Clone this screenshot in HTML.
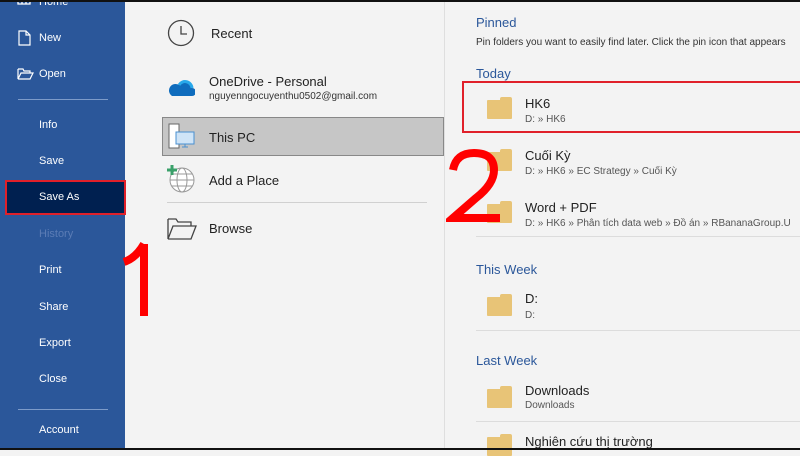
<!DOCTYPE html>
<html><head><meta charset="utf-8"><style>
*{margin:0;padding:0;box-sizing:border-box}
body{width:800px;height:450px;overflow:hidden;background:#f3f3f3;font-family:"Liberation Sans","DejaVu Sans",sans-serif;position:relative}
.a{position:absolute;white-space:nowrap}
#side{position:absolute;left:0;top:0;width:125px;height:450px;background:#2b579a}
.s{position:absolute;left:39px;color:#fff;font-size:11px}
.hdr{color:#2b579a;font-size:13px}
.t{font-size:13px;color:#222}
.p{font-size:10px;color:#555}
.fold{position:absolute;width:25px;height:19px;background:#e8c477;border-radius:1px}
.fold:before{content:"";position:absolute;right:0;top:-3px;width:12px;height:4px;background:#e8c477;border-radius:2px 2px 0 0}
.hl{position:absolute;left:476px;height:1px;background:#dcdcdc;width:324px}
.num{position:absolute;color:#f00;font-family:"DejaVu Sans",sans-serif;font-weight:normal}
</style></head><body>
<div id="side">
<div class="s" style="top:-4px">Home</div>
<div class="s" style="top:32px">New</div>
<div class="s" style="top:68px">Open</div>
<div class="a" style="left:18px;top:99px;width:90px;height:1px;background:#7d9bc9"></div>
<div class="s" style="top:119px">Info</div>
<div class="s" style="top:155px">Save</div>
<div class="a" style="left:5px;top:180px;width:121px;height:35px;background:#002050;border:2px solid #e0202a"></div>
<div class="s" style="top:191px">Save As</div>
<div class="s" style="top:228px;color:#5b7cb5">History</div>
<div class="s" style="top:264px">Print</div>
<div class="s" style="top:301px">Share</div>
<div class="s" style="top:337px">Export</div>
<div class="s" style="top:373px">Close</div>
<div class="a" style="left:18px;top:409px;width:90px;height:1px;background:#7d9bc9"></div>
<div class="s" style="top:424px">Account</div>
<svg class="a" style="left:16px;top:-4px" width="16" height="10"><path d="M2 0v8h12V0M6 8V3h4v5" fill="none" stroke="#fff" stroke-width="1.3"/></svg>
<svg class="a" style="left:18px;top:30px" width="14" height="16"><path d="M1 1h7l4 4v10H1z M8 1v4h4" fill="none" stroke="#fff" stroke-width="1.2"/></svg>
<svg class="a" style="left:17px;top:67px" width="18" height="14"><path d="M1 2h5l1 2h6v2 M1 2v10l3-6h12l-3 6H1" fill="none" stroke="#fff" stroke-width="1.2"/></svg>
</div>
<svg class="a" style="left:118px;top:240px" width="40" height="80"><path d="M26 76V4 M26 4 Q18 18 6 22" fill="none" stroke="#f00" stroke-width="8"/></svg>
<svg class="a" style="left:167px;top:19px" width="28" height="28"><circle cx="14" cy="14" r="12.5" fill="none" stroke="#444" stroke-width="1.3"/><path d="M14 7v8h6" fill="none" stroke="#444" stroke-width="1.3"/></svg>
<div class="a t" style="left:211px;top:26px">Recent</div>
<svg class="a" style="left:167px;top:77px" width="28" height="20"><path d="M5 19h20a4 4 0 0 0 0-8 7 7 0 0 0-13-3 6 6 0 0 0-7 11z" fill="#0f6cbd"/><path d="M12 8a7 7 0 0 1 13 3" fill="none" stroke="#28a8ea" stroke-width="3"/></svg>
<div class="a t" style="left:209px;top:74px">OneDrive - Personal</div>
<div class="a" style="left:209px;top:91px;font-size:10px;color:#333">nguyenngocuyenthu0502@gmail.com</div>
<div class="a" style="left:162px;top:117px;width:282px;height:39px;background:#c6c6c6;border:1px solid #888"></div>
<svg class="a" style="left:167px;top:123px" width="30" height="28"><rect x="2" y="1" width="10" height="24" fill="#fff" stroke="#666"/><rect x="9" y="9" width="18" height="12" fill="#cfe4f7" stroke="#4a90d0"/><path d="M15 24h6M18 21v3" stroke="#4a90d0"/></svg>
<div class="a t" style="left:209px;top:130px">This PC</div>
<svg class="a" style="left:166px;top:164px" width="30" height="30"><circle cx="16" cy="16" r="12" fill="#fff" stroke="#999"/><ellipse cx="16" cy="16" rx="5" ry="12" fill="none" stroke="#999"/><path d="M4 16h24M6 10h20M6 22h20" stroke="#999"/><path d="M6 1v10M1 6h10" stroke="#3aa06a" stroke-width="3"/></svg>
<div class="a t" style="left:209px;top:173px">Add a Place</div>
<div class="a" style="left:167px;top:202px;width:260px;height:1px;background:#d0d0d0"></div>
<svg class="a" style="left:167px;top:217px" width="30" height="24"><path d="M1 2h8l2 3h13v4 M1 2v20l5-13h23l-5 13H1" fill="none" stroke="#444" stroke-width="1.3"/></svg>
<div class="a t" style="left:209px;top:221px">Browse</div>
<div class="a" style="left:444px;top:0;width:1px;height:450px;background:#dedede"></div>
<div class="a hdr" style="left:476px;top:15px">Pinned</div>
<div class="a" style="left:476px;top:37px;font-size:10px;color:#333">Pin folders you want to easily find later. Click the pin icon that appears</div>
<div class="a hdr" style="left:476px;top:66px">Today</div>
<div class="a" style="left:462px;top:81px;width:340px;height:52px;border:2px solid #e0202a"></div>
<div class="fold" style="left:487px;top:100px"></div>
<div class="a t" style="left:525px;top:96px">HK6</div><div class="a p" style="left:525px;top:114px">D: » HK6</div>
<div class="fold" style="left:487px;top:152px"></div>
<div class="a t" style="left:525px;top:148px">Cuối Kỳ</div><div class="a p" style="left:525px;top:166px">D: » HK6 » EC Strategy » Cuối Kỳ</div>
<div class="fold" style="left:487px;top:204px"></div>
<div class="a t" style="left:525px;top:200px">Word + PDF</div><div class="a p" style="left:525px;top:218px">D: » HK6 » Phân tích data web » Đồ án » RBananaGroup.U</div>
<div class="hl" style="top:236px"></div>
<svg class="a" style="left:446px;top:148px" width="58" height="76"><path d="M7 22 Q10 5 28 5 Q48 5 48 22 Q48 36 30 50 L7 70 H54" fill="none" stroke="#f00" stroke-width="8"/></svg>
<div class="a hdr" style="left:476px;top:262px">This Week</div>
<div class="fold" style="left:487px;top:297px"></div>
<div class="a t" style="left:525px;top:291px">D:</div><div class="a p" style="left:525px;top:310px">D:</div>
<div class="hl" style="top:330px"></div>
<div class="a hdr" style="left:476px;top:353px">Last Week</div>
<div class="fold" style="left:487px;top:389px"></div>
<div class="a t" style="left:525px;top:383px">Downloads</div><div class="a p" style="left:525px;top:400px">Downloads</div>
<div class="hl" style="top:421px"></div>
<div class="fold" style="left:487px;top:437px"></div>
<div class="a t" style="left:525px;top:434px">Nghiên cứu thị trường</div>
<div class="a" style="left:0;top:0;width:800px;height:2px;background:#111"></div>
<div class="a" style="left:0;top:448px;width:800px;height:2px;background:#111"></div>
</body></html>
